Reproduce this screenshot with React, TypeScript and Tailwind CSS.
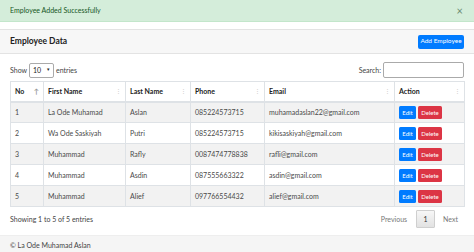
import React from 'react';

interface Employee {
  first: string;
  last: string;
  phone: string;
  email: string;
}

const employees: Employee[] = [
  { first: 'La Ode Muhamad', last: 'Aslan', phone: '085224573715', email: 'muhamadaslan22@gmail.com' },
  { first: 'Wa Ode Saskiyah', last: 'Putri', phone: '085224573715', email: 'kikisaskiyah@gmail.com' },
  { first: 'Muhammad', last: 'Rafly', phone: '0087474778838', email: 'rafli@gmail.com' },
  { first: 'Muhammad', last: 'Asdin', phone: '087555663322', email: 'asdin@gmail.com' },
  { first: 'Muhammad', last: 'Alief', phone: '097766554432', email: 'alief@gmail.com' },
];

const SortIcon: React.FC<{ active?: boolean }> = ({ active }) => (
  <span className="flex flex-col leading-none text-[5px] text-[#d0d0d0]">
    {active ? <span className="text-[#9a9a9a] text-[7px] leading-[7px]">↑</span> : <span>⋮</span>}
  </span>
);

const headers = ['No', 'First Name', 'Last Name', 'Phone', 'Email', 'Action'];
const widths = ['w-[33px]', 'w-[82px]', 'w-[65px]', 'w-[74px]', 'w-[130px]', 'w-[70px]'];

export default function App() {
  return (
    <div className="w-[474px] h-[252px] bg-white overflow-hidden text-[#212529]" style={{ fontFamily: 'Lato, sans-serif' }}>
      <div className="h-[22px] bg-[#d4edda] border-b border-[#c3e6cb] flex items-center justify-between px-[10px] text-[#155724]">
        <span className="text-[7px]">Employee Added Successfully</span>
        <span className="text-[11px] text-[#6a8a70] leading-none pr-[1px]">×</span>
      </div>

      <div className="mt-[7px] border-t border-[#e3e3e3]">
        <div className="h-[24px] bg-[#f7f7f7] border-b border-[#e3e3e3] flex items-center justify-between px-[10px]">
          <span className="text-[8.5px] font-bold text-[#222]">Employee Data</span>
          <button className="h-[14px] w-[46px] bg-[#007bff] text-white text-[6.5px] rounded-[2px] leading-none">Add Employee</button>
        </div>

        <div className="px-[10px] pt-[8px]">
          <div className="flex items-center justify-between h-[16px] text-[7px] text-[#444]">
            <div className="flex items-center gap-[2px]">
              <span>Show</span>
              <div className="w-[25px] h-[15px] border border-[#aaa] rounded-[2px] flex items-center justify-between px-[3px] text-[7px] text-[#222]">
                <span>10</span>
                <span className="text-[5px]">▾</span>
              </div>
              <span>entries</span>
            </div>
            <div className="flex items-center gap-[2px]">
              <span>Search:</span>
              <div className="w-[81px] h-[16px] border border-[#aaa] rounded-[2px]" />
            </div>
          </div>

          <table className="mt-[3px] w-[454px] border-collapse text-[7px] table-fixed">
            <thead>
              <tr className="h-[20px]">
                {headers.map((h, i) => (
                  <th key={h} className={`${widths[i]} border border-[#dee2e6] border-b-2 text-left font-bold px-[4px] text-[#222]`}>
                    <div className="flex items-center justify-between">
                      <span>{h}</span>
                      <SortIcon active={i === 0} />
                    </div>
                  </th>
                ))}
              </tr>
            </thead>
            <tbody>
              {employees.map((e, i) => (
                <tr key={i} className={`h-[21px] ${i % 2 === 0 ? 'bg-[#f2f2f2]' : 'bg-white'} text-[#4a4a4a]`}>
                  <td className="border border-[#dee2e6] px-[4px]">{i + 1}</td>
                  <td className="border border-[#dee2e6] px-[4px]">{e.first}</td>
                  <td className="border border-[#dee2e6] px-[4px]">{e.last}</td>
                  <td className="border border-[#dee2e6] px-[4px]">{e.phone}</td>
                  <td className="border border-[#dee2e6] px-[4px]">{e.email}</td>
                  <td className="border border-[#dee2e6] px-[4px]">
                    <div className="flex gap-[2px]">
                      <span className="h-[13px] w-[17px] bg-[#007bff] text-white rounded-[1.5px] flex items-center justify-center text-[6px]">Edit</span>
                      <span className="h-[13px] w-[24px] bg-[#dc3545] text-white rounded-[1.5px] flex items-center justify-center text-[6px]">Delete</span>
                    </div>
                  </td>
                </tr>
              ))}
            </tbody>
          </table>

          <div className="flex items-center justify-between h-[22px] mt-[1px] text-[7px] text-[#444]">
            <span>Showing 1 to 5 of 5 entries</span>
            <div className="flex items-center text-[#777]">
              <span className="px-[9px]">Previous</span>
              <span className="w-[19px] h-[18px] border border-[#cfcfcf] bg-gradient-to-b from-[#f7f7f7] to-[#e2e2e2] flex items-center justify-center text-[#333] rounded-[1px]">1</span>
              <span className="pl-[8px] pr-[6px]">Next</span>
            </div>
          </div>
        </div>
      </div>

      <div className="mt-[5px] h-[20px] bg-[#f5f5f5] border-t border-[#eee] flex items-center px-[10px] text-[7px] text-[#444]">
        © La Ode Muhamad Aslan
      </div>
    </div>
  );
}
